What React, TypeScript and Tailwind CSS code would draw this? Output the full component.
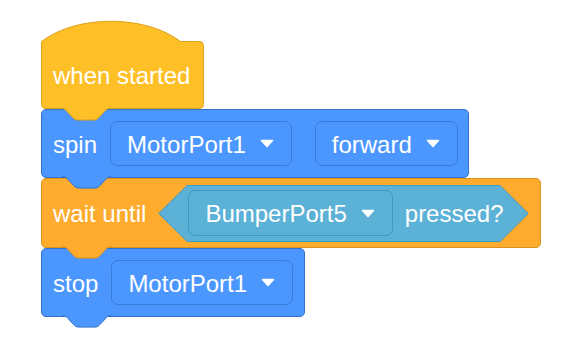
import React from "react";

const FONT = "font-['Liberation_Sans',Arial,sans-serif]";

function Tab({ fill, stroke }: { fill: string; stroke: string }) {
  const curve =
    "c2.7,0 4.05,1.45 5.4,2.9 l5.4,5.8 c1.35,1.45 2.7,2.9 5.4,2.9 h16.2 c2.7,0 4.05,-1.45 5.4,-2.9 l5.4,-5.8 c1.35,-1.45 2.7,-2.9 5.4,-2.9";
  return (
    <svg
      className="absolute left-[20px] top-[calc(100%-2px)] z-10"
      width="50"
      height="15"
      viewBox="0 0 50 15"
    >
      <path d={`M0.5,0 V1.5 ${curve} V0 Z`} fill={fill} />
      <path d={`M0.5,1.5 ${curve}`} fill="none" stroke={stroke} strokeWidth="1" />
    </svg>
  );
}

function Arrow() {
  return (
    <svg width="14" height="9" viewBox="0 0 14 9" className="shrink-0">
      <path
        d="M1.5,1.5 H12.5 L7,7.5 Z"
        fill="white"
        stroke="white"
        strokeWidth="1.5"
        strokeLinejoin="round"
      />
    </svg>
  );
}

function Label({ children }: { children: React.ReactNode }) {
  return <span className="relative top-[1px] whitespace-nowrap">{children}</span>;
}

function Field({
  label,
  border,
  h = "h-[45px]",
}: {
  label: string;
  border: string;
  h?: string;
}) {
  return (
    <div
      className={`flex ${h} shrink-0 items-center gap-[14px] rounded-[7px] border pl-[16px] pr-[17px] ${border}`}
    >
      <Label>{label}</Label>
      <Arrow />
    </div>
  );
}

export default function App() {
  return (
    <div
      className={`h-[360px] w-[568px] overflow-hidden bg-white pl-[41px] pt-[20px] text-[24px] leading-[28px] text-white ${FONT}`}
    >
      <div className="flex flex-col items-start">
        {/* Hat block */}
        <div className="relative z-40 h-[89px] w-[163px]">
          <svg
            className="absolute inset-0"
            width="163"
            height="89"
            viewBox="0 0 163 89"
          >
            <path
              d="M0.5,21.5 C35.5,-5.5 104.5,-5.5 139.5,21.5 H158.5 A4,4 0 0 1 162.5,25.5 V84.5 A4,4 0 0 1 158.5,88.5 H4.5 A4,4 0 0 1 0.5,84.5 Z"
              fill="#FFBF26"
              stroke="#DDA21C"
              strokeWidth="1"
            />
          </svg>
          <Tab fill="#FFBF26" stroke="#C99A2A" />
          <div className="relative flex h-full items-end">
            <div className="flex h-[68px] items-center pl-[12px]">
              <Label>when started</Label>
            </div>
          </div>
        </div>

        {/* spin block */}
        <div className="relative z-30 flex h-[69px] items-center gap-[13px] rounded-[5px] border border-[#3373CC] bg-[#4C97FF] pl-[11px] pr-[10px]">
          <Tab fill="#4C97FF" stroke="#3373CC" />
          <Label>spin</Label>
          <Field label="MotorPort1" border="border-[#3A7BD9]" />
          <div className="ml-[10px]">
            <Field label="forward" border="border-[#3A7BD9]" />
          </div>
        </div>

        {/* wait until block */}
        <div className="relative z-20 flex h-[70px] items-center gap-[12px] rounded-[5px] border border-[#D9921F] bg-[#FFAB2D] pl-[11px] pr-[11px]">
          <Tab fill="#FFAB2D" stroke="#D9921F" />
          <Label>wait until</Label>
          <div className="relative flex h-[57px] w-[371px] shrink-0 items-center pl-[30px]">
            <svg
              className="absolute inset-0"
              width="371"
              height="57"
              viewBox="0 0 371 57"
            >
              <path
                d="M0.8,28.5 L29,0.5 H342 L370.2,28.5 L342,56.5 H29 Z"
                fill="#5CB1D6"
                stroke="#3E9AC6"
                strokeWidth="1"
              />
            </svg>
            <div className="relative flex items-center gap-[12px]">
              <Field label="BumperPort5" border="border-[#3E98C2]" h="h-[46px]" />
              <Label>pressed?</Label>
            </div>
          </div>
        </div>

        {/* stop block */}
        <div className="relative z-10 flex h-[69px] items-center gap-[13px] rounded-[5px] border border-[#3373CC] bg-[#4C97FF] pl-[11px] pr-[11px]">
          <Tab fill="#4C97FF" stroke="#3373CC" />
          <Label>stop</Label>
          <Field label="MotorPort1" border="border-[#3A7BD9]" />
        </div>
      </div>
    </div>
  );
}
